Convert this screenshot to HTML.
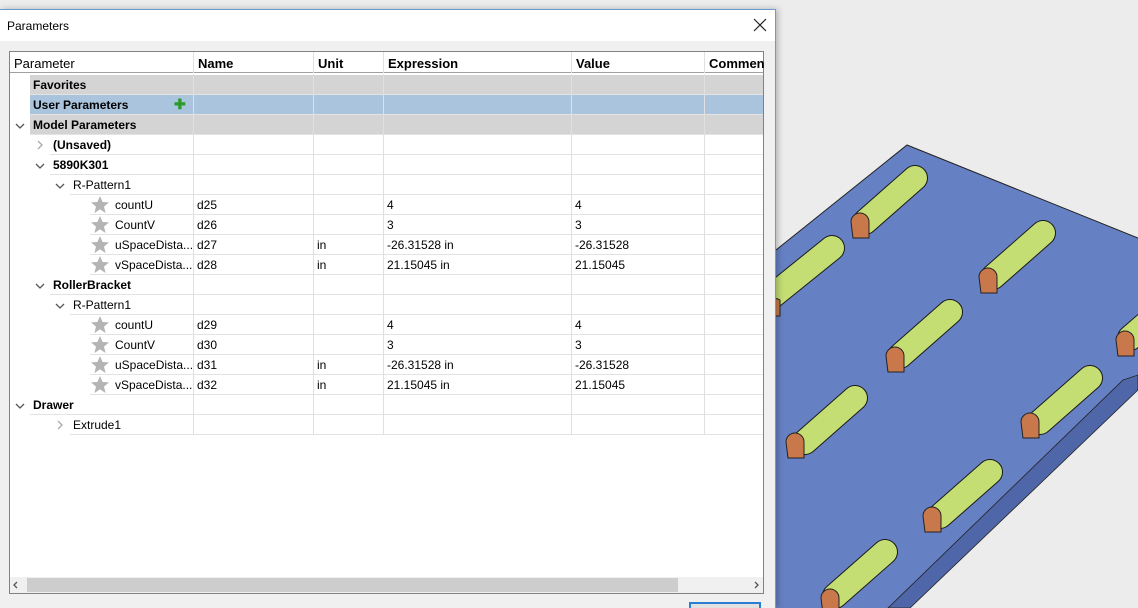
<!DOCTYPE html>
<html><head><meta charset="utf-8"><style>
*{margin:0;padding:0;box-sizing:border-box}
html,body{width:1138px;height:608px;overflow:hidden}
body{background:#ececec;font-family:"Liberation Sans",sans-serif;font-size:12px;color:#000;position:relative}
.a{position:absolute}
.dlg{left:0;top:9px;width:776px;height:599px;background:#f0f0f0;border:1px solid #6a9ad0;border-left:none;border-bottom:none;box-shadow:2px 0 6px rgba(0,0,0,.25);overflow:hidden}
.tb{left:9px;top:51px;width:755px;height:543px;background:#fff;border:1px solid #828282}
.r{position:absolute;left:0;width:753px;height:20px;border-bottom:1px solid #e3e3e3}
.t{position:absolute;top:3px;white-space:nowrap}
.b{font-weight:bold}
.v{position:absolute;top:0;width:1px;background:#e0e0e0}
.chev{position:absolute}
.h{position:absolute;top:4px;font-size:13px;font-weight:bold}
</style></head><body>
<svg class="a" style="left:0;top:0" width="1138" height="608">
<polygon points="907,145 1138,238 1138,375 1123,380 888,608 776,608 776,250" fill="#6680c4"/>
<polygon points="1123,380 1138,375 1138,390 910,608 888,608" fill="#4f66a8" stroke="#222" stroke-width="0.8"/>
<polyline points="776,250 907,145 1138,238" fill="none" stroke="#222" stroke-width="1"/>
<g fill="none">
<g stroke="#1a1a1a" stroke-width="26" stroke-linecap="round">
<line x1="865" y1="222" x2="915" y2="178"/><line x1="993" y1="277" x2="1043" y2="233"/><line x1="770" y1="298" x2="832" y2="248"/>
<line x1="900" y1="356" x2="950" y2="312"/><line x1="1130" y1="338" x2="1160" y2="312"/><line x1="805" y1="442" x2="855" y2="398"/>
<line x1="940" y1="516" x2="990" y2="472"/><line x1="1040" y1="422" x2="1090" y2="378"/><line x1="835" y1="596" x2="885" y2="552"/>
</g>
<g stroke="#c4de74" stroke-width="24" stroke-linecap="round">
<line x1="865" y1="222" x2="915" y2="178"/><line x1="993" y1="277" x2="1043" y2="233"/><line x1="770" y1="298" x2="832" y2="248"/>
<line x1="900" y1="356" x2="950" y2="312"/><line x1="1130" y1="338" x2="1160" y2="312"/><line x1="805" y1="442" x2="855" y2="398"/>
<line x1="940" y1="516" x2="990" y2="472"/><line x1="1040" y1="422" x2="1090" y2="378"/><line x1="835" y1="596" x2="885" y2="552"/>
</g>
</g>
<g fill="#c8784a" stroke="#222" stroke-width="1">
<path d="M851,222 a9,9 0 0 1 18,0 v16 h-16 z"/><path d="M979,277 a9,9 0 0 1 18,0 v16 h-16 z"/><path d="M770,300 a9,9 0 0 1 10,0 v16 h-10 z"/>
<path d="M886,356 a9,9 0 0 1 18,0 v16 h-16 z"/><path d="M1116,340 a9,9 0 0 1 18,0 v16 h-16 z"/><path d="M786,442 a9,9 0 0 1 18,0 v16 h-16 z"/>
<path d="M923,516 a9,9 0 0 1 18,0 v16 h-16 z"/><path d="M1021,422 a9,9 0 0 1 18,0 v16 h-16 z"/><path d="M821,598 a9,9 0 0 1 18,0 v16 h-16 z"/>
</g>
</svg>
<div class="a dlg">
<div class="a" style="left:0;top:0;width:775px;height:31px;background:#fff"></div>
<div class="a" style="left:7px;top:9px">Parameters</div>
<svg class="a" style="left:753px;top:8px" width="14" height="14"><path d="M1,1 L13,13 M13,1 L1,13" stroke="#222" stroke-width="1.2"/></svg>
<div class="a" style="left:689px;top:592px;width:72px;height:24px;border:2px solid #2a7fd4;background:#e1e1e1"></div>
</div>
<div class="a tb">
<div class="a" style="left:0;top:0;width:753px;height:21px;border-bottom:1px solid #a0a0a0"></div>
<div class="h" style="left:4px;font-weight:normal">Parameter</div>
<div class="h" style="left:188px">Name</div>
<div class="h" style="left:308px">Unit</div>
<div class="h" style="left:378px">Expression</div>
<div class="h" style="left:566px">Value</div>
<div class="h" style="left:699px">Commen</div>
<div class="v" style="left:183px;height:21px"></div><div class="v" style="left:303px;height:21px"></div><div class="v" style="left:373px;height:21px"></div><div class="v" style="left:561px;height:21px"></div><div class="v" style="left:694px;height:21px"></div>
<div class="a" style="left:0;top:22px;width:753px;height:520px">
<div class="r" style="top:1px;left:20px;width:733px;background:#d4d4d4"><span class="t b" style="left:3px">Favorites</span></div>
<div class="r" style="top:21px;left:20px;width:733px;background:#a9c4dc"><span class="t b" style="left:3px">User Parameters</span><span class="t" style="left:144px;top:1px;color:#2a9a2a;font-size:14px;font-weight:bold">✚</span></div>
<div class="r" style="top:41px;left:20px;width:733px;background:#d4d4d4"><span class="t b" style="left:3px">Model Parameters</span></div>
<div class="r" style="top:61px;left:40px;width:713px"><span class="t b" style="left:3px">(Unsaved)</span></div>
<div class="r" style="top:81px;left:40px;width:713px"><span class="t b" style="left:3px">5890K301</span></div>
<div class="r" style="top:101px;left:60px;width:693px"><span class="t" style="left:3px">R-Pattern1</span></div>
<div class="r" style="top:121px;left:80px;width:673px"><span class="t" style="left:25px">countU</span></div>
<div class="r" style="top:141px;left:80px;width:673px"><span class="t" style="left:25px">CountV</span></div>
<div class="r" style="top:161px;left:80px;width:673px"><span class="t" style="left:25px">uSpaceDista...</span></div>
<div class="r" style="top:181px;left:80px;width:673px"><span class="t" style="left:25px">vSpaceDista...</span></div>
<div class="r" style="top:201px;left:40px;width:713px"><span class="t b" style="left:3px">RollerBracket</span></div>
<div class="r" style="top:221px;left:60px;width:693px"><span class="t" style="left:3px">R-Pattern1</span></div>
<div class="r" style="top:241px;left:80px;width:673px"><span class="t" style="left:25px">countU</span></div>
<div class="r" style="top:261px;left:80px;width:673px"><span class="t" style="left:25px">CountV</span></div>
<div class="r" style="top:281px;left:80px;width:673px"><span class="t" style="left:25px">uSpaceDista...</span></div>
<div class="r" style="top:301px;left:80px;width:673px"><span class="t" style="left:25px">vSpaceDista...</span></div>
<div class="r" style="top:321px;left:20px;width:733px"><span class="t b" style="left:3px">Drawer</span></div>
<div class="r" style="top:341px;left:60px;width:693px"><span class="t" style="left:3px">Extrude1</span></div>
<svg class="chev" style="left:0;top:0" width="60" height="362" fill="none" stroke-width="1.3">
<g stroke="#555">
<path d="M6,50 l4,4 l4,-4"/><path d="M26,90 l4,4 l4,-4"/><path d="M46,110 l4,4 l4,-4"/><path d="M26,210 l4,4 l4,-4"/><path d="M46,230 l4,4 l4,-4"/><path d="M6,330 l4,4 l4,-4"/>
</g>
<g stroke="#aaa"><path d="M28,67 l4,4 l-4,4"/><path d="M48,347 l4,4 l-4,4"/></g>
</svg>
<div class="v" style="left:183px;height:361px"></div><div class="v" style="left:303px;height:361px"></div><div class="v" style="left:373px;height:361px"></div><div class="v" style="left:561px;height:361px"></div><div class="v" style="left:694px;height:361px"></div>
</div>
<svg class="a" style="left:80px;top:143px" width="20" height="200">
<g fill="#b4b4b4">
<path id="s" d="M10,1 L12.6,7 L19,7.4 L14,11.6 L15.6,18 L10,14.4 L4.4,18 L6,11.6 L1,7.4 L7.4,7 Z"/>
<use href="#s" y="20"/><use href="#s" y="40"/><use href="#s" y="60"/><use href="#s" y="120"/><use href="#s" y="140"/><use href="#s" y="160"/><use href="#s" y="180"/>
</g></svg>
<div class="a" style="left:0;top:143px;width:753px">
<div class="a" style="top:3px;left:187px">d25</div><div class="a" style="top:3px;left:377px">4</div><div class="a" style="top:3px;left:565px">4</div>
<div class="a" style="top:23px;left:187px">d26</div><div class="a" style="top:23px;left:377px">3</div><div class="a" style="top:23px;left:565px">3</div>
<div class="a" style="top:43px;left:187px">d27</div><div class="a" style="top:43px;left:307px">in</div><div class="a" style="top:43px;left:377px">-26.31528 in</div><div class="a" style="top:43px;left:565px">-26.31528</div>
<div class="a" style="top:63px;left:187px">d28</div><div class="a" style="top:63px;left:307px">in</div><div class="a" style="top:63px;left:377px">21.15045 in</div><div class="a" style="top:63px;left:565px">21.15045</div>
<div class="a" style="top:123px;left:187px">d29</div><div class="a" style="top:123px;left:377px">4</div><div class="a" style="top:123px;left:565px">4</div>
<div class="a" style="top:143px;left:187px">d30</div><div class="a" style="top:143px;left:377px">3</div><div class="a" style="top:143px;left:565px">3</div>
<div class="a" style="top:163px;left:187px">d31</div><div class="a" style="top:163px;left:307px">in</div><div class="a" style="top:163px;left:377px">-26.31528 in</div><div class="a" style="top:163px;left:565px">-26.31528</div>
<div class="a" style="top:183px;left:187px">d32</div><div class="a" style="top:183px;left:307px">in</div><div class="a" style="top:183px;left:377px">21.15045 in</div><div class="a" style="top:183px;left:565px">21.15045</div>
</div>
<div class="a" style="left:0;top:525px;width:753px;height:16px;background:#f0f0f0"></div>
<div class="a" style="left:17px;top:526px;width:651px;height:14px;background:#cdcdcd"></div>
<svg class="a" style="left:0;top:525px" width="753" height="16" fill="none" stroke="#555" stroke-width="1.3"><path d="M7,5 l-3,3 l3,3"/><path d="M745,5 l3,3 l-3,3"/></svg>
</div>
</body></html>
